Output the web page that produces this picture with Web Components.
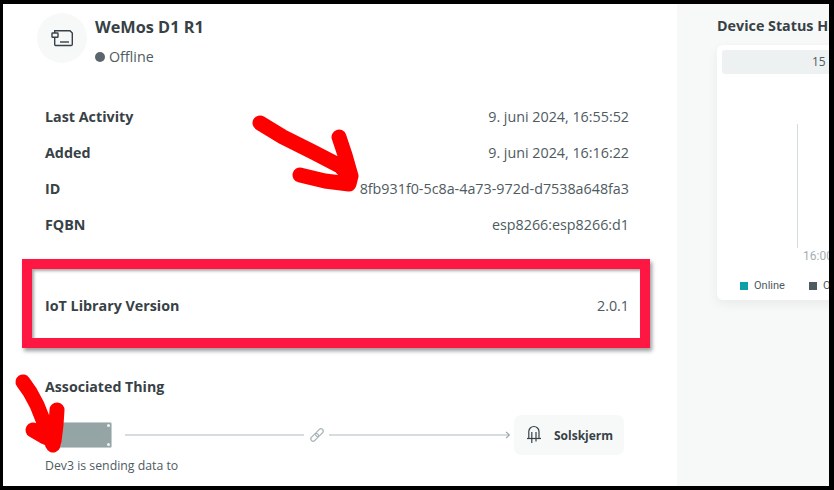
<!DOCTYPE html>
<html>
<head>
<meta charset="utf-8">
<title>WeMos D1 R1</title>
<style>
  html, body { margin: 0; padding: 0; background: #000; }
  body { font-family: "Open Sans", "Noto Sans", sans-serif; color: #374146; width: 834px; height: 490px; overflow: hidden; }
</style>
</head>
<body>
<device-page>
  <device-panel>
    <device-head slot="head" name="WeMos D1 R1" status="Offline"></device-head>
    <info-row label="Last Activity">9. juni 2024, 16:55:52</info-row>
    <info-row label="Added">9. juni 2024, 16:16:22</info-row>
    <info-row label="ID">8fb931f0-5c8a-4a73-972d-d7538a648fa3</info-row>
    <info-row label="FQBN">esp8266:esp8266:d1</info-row>
    <info-row class="lib" label="IoT Library Version">2.0.1</info-row>
    <thing-link heading="Associated Thing" thing="Solskjerm">Dev3 is sending data to</thing-link>
  </device-panel>
  <status-history></status-history>
  <scribble-marks></scribble-marks>
</device-page>

<script>
class DevicePage extends HTMLElement {
  constructor() {
    super();
    this.attachShadow({ mode: 'open' });
    this.shadowRoot.innerHTML = `
      <style>
        :host {
          display: flex;
          position: relative;
          box-sizing: border-box;
          width: 834px;
          height: 490px;
          border: solid #000;
          border-width: 4px 5px 4px 3px;
          background: #fff;
          overflow: hidden;
        }
      </style>
      <slot></slot>
    `;
  }
}

class DevicePanel extends HTMLElement {
  constructor() {
    super();
    this.attachShadow({ mode: 'open' });
    this.shadowRoot.innerHTML = `
      <style>
        :host {
          display: block;
          box-sizing: border-box;
          flex: 0 0 674px;
          padding: 9px 48px 0 42px;
          background: #fff;
        }
        #rows { margin-top: 35px; }
      </style>
      <slot name="head"></slot>
      <div id="rows"><slot></slot></div>
    `;
  }
}

class DeviceHead extends HTMLElement {
  constructor() {
    super();
    this.attachShadow({ mode: 'open' });
    this.shadowRoot.innerHTML = `
      <style>
        :host { display: flex; gap: 8px; margin-left: -8px; height: 50px; }
        #icon {
          width: 50px;
          height: 50px;
          border-radius: 50%;
          background: #f7f9f9;
          display: flex;
          align-items: center;
          justify-content: center;
        }
        h1 { margin: 3px 0 0; font-size: 16.3px; line-height: 22px; font-weight: 700; color: #374146; }
        #status { display: flex; align-items: center; gap: 4px; margin-top: 9px; font-size: 14.3px; line-height: 19px; color: #4e5b61; }
        #dot { width: 10px; height: 10px; border-radius: 50%; background: #5a666b; }
      </style>
      <div id="icon">
        <svg width="24" height="24" viewBox="0 0 24 24" fill="none" stroke="#374146" stroke-width="1.4">
          <path d="M4.7 7V4.7H20L22.3 7V18.3a1.2 1.2 0 0 1-1.2 1.2H5.9a1.2 1.2 0 0 1-1.2-1.2V11.3"/>
          <rect x="2" y="7" width="6" height="4.3" rx=".5"/>
          <path d="M10 16H19"/>
        </svg>
      </div>
      <div>
        <h1></h1>
        <div id="status"><span id="dot"></span><span id="txt"></span></div>
      </div>
    `;
    this.shadowRoot.querySelector('h1').textContent = this.getAttribute('name');
    this.shadowRoot.getElementById('txt').textContent = this.getAttribute('status');
  }
}

class InfoRow extends HTMLElement {
  constructor() {
    super();
    this.attachShadow({ mode: 'open' });
    this.shadowRoot.innerHTML = `
      <style>
        :host {
          display: flex;
          justify-content: space-between;
          align-items: center;
          height: 36px;
          font-size: 14.3px;
          color: #4e5b61;
        }
        :host(.lib) { margin-top: 45px; }
        b { font-weight: 700; color: #374146; }
      </style>
      <b></b>
      <span><slot></slot></span>
    `;
    this.shadowRoot.querySelector('b').textContent = this.getAttribute('label');
  }
}

class ThingLink extends HTMLElement {
  constructor() {
    super();
    this.attachShadow({ mode: 'open' });
    this.shadowRoot.innerHTML = `
      <style>
        :host { display: block; margin-top: 54px; }
        h2 { margin: 0; font-size: 14.2px; line-height: 19px; font-weight: 700; color: #374146; }
        #flow { display: flex; align-items: center; height: 40px; margin-top: 19px; margin-right: 5px; }
        #board {
          position: relative;
          box-sizing: border-box;
          flex: 0 0 67px;
          height: 26px;
          margin-right: 13px;
          background: #95a5a6;
          border: 1px solid #c3cdcd;
          border-radius: 2px;
        }
        #board i { position: absolute; width: 3px; height: 3px; border-radius: 50%; background: #f0f3f3; }
        #line { display: block; flex: 1; }
        #thing {
          flex: 0 0 110px;
          box-sizing: border-box;
          height: 40px;
          margin-left: 4px;
          padding-left: 11px;
          display: flex;
          align-items: center;
          gap: 9px;
          border-radius: 7px;
          background: #f7f9f9;
          font-size: 12px;
          font-weight: 700;
          color: #374146;
        }
        p { margin: 3px 0 0; font-size: 12.3px; line-height: 16px; color: #4e5b61; }
      </style>
      <h2></h2>
      <div id="flow">
        <div id="board">
          <i style="right:1px;top:1px"></i><i style="right:1px;bottom:1px"></i>
          <i style="left:1px;top:1px"></i><i style="left:1px;bottom:1px"></i>
        </div>
        <svg id="line" height="20" viewBox="0 0 385 20" fill="none">
          <path d="M0 10H179M204 10H384" stroke="#c9d2d3" stroke-width="1.5"/>
          <path d="M381 6.8l3.4 3.2-3.4 3.2" stroke="#95a5a6" stroke-width="1.1"/>
          <g stroke="#a9b6b7" stroke-width="1.2" transform="rotate(-45 192 10)">
            <rect x="184.2" y="7.7" width="9" height="4.6" rx="2.3"/>
            <rect x="190.8" y="7.7" width="9" height="4.6" rx="2.3"/>
          </g>
        </svg>
        <div id="thing">
          <svg width="20" height="20" viewBox="0 0 20 20" fill="none" stroke="#374146" stroke-width="1.2">
            <path d="M3.8 13.5V6.6a5.1 5.1 0 0 1 10.2 0v6.9"/>
            <path d="M2 13.5H16"/>
            <path d="M6.8 7V18M11 7V16.5"/>
          </svg>
          <span></span>
        </div>
      </div>
      <p><slot></slot></p>
    `;
    this.shadowRoot.querySelector('h2').textContent = this.getAttribute('heading');
    this.shadowRoot.querySelector('#thing span').textContent = this.getAttribute('thing');
  }
}

class StatusHistory extends HTMLElement {
  constructor() {
    super();
    this.attachShadow({ mode: 'open' });
    this.shadowRoot.innerHTML = `
      <style>
        :host {
          display: block;
          flex: 0 0 auto;
          width: 152px;
          box-sizing: border-box;
          padding: 12px 0 0 40px;
          background: #f7f9f9;
          overflow: hidden;
          white-space: nowrap;
        }
        h2 { margin: 0; font-size: 14.3px; line-height: 19px; font-weight: 700; color: #374146; }
        #card {
          width: 260px;
          height: 255px;
          margin-top: 10px;
          padding: 5px;
          box-sizing: border-box;
          background: #fff;
          border-radius: 6px;
          box-shadow: 0 4px 12px rgba(0,0,0,.06);
        }
        #range {
          box-sizing: border-box;
          height: 24px;
          line-height: 24px;
          padding-left: 90px;
          border-radius: 3px;
          background: #edf1f1;
          font-size: 12px;
          color: #4e5b61;
        }
        #chart { height: 190px; margin-left: 75px; padding-top: 50px; box-sizing: border-box; }
        #tick { width: 1px; height: 124px; background: #d5dcdc; }
        #time { margin-left: 6px; font-family: Roboto, sans-serif; font-size: 12px; line-height: 16px; color: #a3b0b2; }
        #legend { display: flex; align-items: center; margin: 14px 0 0 18px; font-family: Roboto, sans-serif; font-size: 11px; line-height: 16px; color: #4e5b61; }
        #legend i { width: 8px; height: 8px; margin-right: 6px; }
        #legend span { margin-right: 24px; }
      </style>
      <h2>Device Status History</h2>
      <div id="card">
        <div id="range">15 days</div>
        <div id="chart">
          <div id="tick"></div>
          <div id="time">16:00</div>
        </div>
        <div id="legend">
          <i style="background:#0ca1a6"></i><span>Online</span>
          <i style="background:#4e5b61"></i><span>Offline</span>
        </div>
      </div>
    `;
  }
}

/* hand drawn marks lying over the page */
class ScribbleMarks extends HTMLElement {
  constructor() {
    super();
    this.attachShadow({ mode: 'open' });
    this.shadowRoot.innerHTML = `
      <style>
        :host { position: absolute; left: -3px; top: -4px; width: 834px; height: 490px; pointer-events: none; }
        svg { position: absolute; left: 0; top: 0; }
        #box {
          position: absolute;
          left: 22px;
          top: 259px;
          width: 628px;
          height: 89px;
          box-sizing: border-box;
          border: 10px solid #ff1744;
          box-shadow: 2px 3px 4px rgba(0,0,0,.4), inset 2px 2px 3px rgba(0,0,0,.35);
        }
      </style>
      <div id="box"></div>
      <svg width="834" height="490" fill="none" stroke="#f00" stroke-linecap="round" stroke-linejoin="round">
        <path stroke-width="15" d="M260 123L283 137L313 152L340 166L350 177M339 137L345 155L351 176L349 184L325 181L300 175"/>
        <path stroke-width="15" d="M23 382L30 392L37 405L45 425L53 445M57 410L56 425L54 441L45 437L33 430"/>
      </svg>
    `;
  }
}

customElements.define('device-page', DevicePage);
customElements.define('device-panel', DevicePanel);
customElements.define('device-head', DeviceHead);
customElements.define('info-row', InfoRow);
customElements.define('thing-link', ThingLink);
customElements.define('status-history', StatusHistory);
customElements.define('scribble-marks', ScribbleMarks);
</script>
</body>
</html>
